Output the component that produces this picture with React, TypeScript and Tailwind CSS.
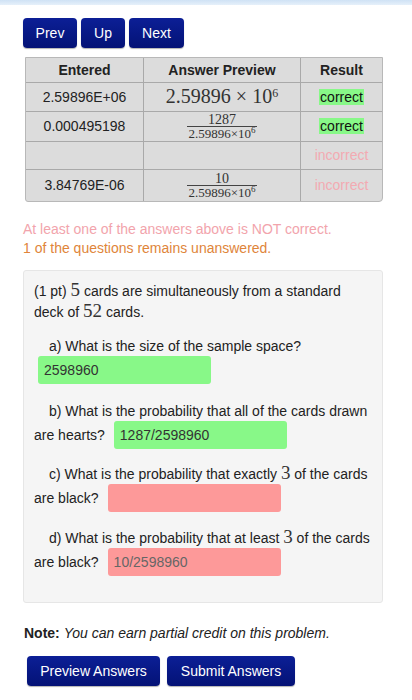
import React from 'react';

const navBtn =
  'h-[30px] rounded-[4px] bg-gradient-to-b from-[#0c1f96] to-[#041276] text-white text-[14px] flex items-center justify-center shadow-[0_1px_1px_rgba(0,0,0,0.3)]';

const serif = { fontFamily: '"Liberation Serif", "DejaVu Serif", serif' };

const Frac = ({ top }: { top: string }) => (
  <span className="inline-flex flex-col items-center leading-none align-middle" style={serif}>
    <span className="text-[14px] text-[#333] leading-[13px]">{top}</span>
    <span className="text-[13px] text-[#333] border-t border-[#444] leading-[14px] px-[1px]">
      2.59896×10<sup className="text-[9px] relative top-[-5px]">6</sup>
    </span>
  </span>
);

const M = ({ children }: { children: React.ReactNode }) => (
  <span className="text-[19px] text-[#333]" style={serif}>
    {children}
  </span>
);

const rows = [
  { entered: '2.59896E+06', preview: 'big', ok: true, h: 'h-[29px]' },
  { entered: '0.000495198', preview: '1287', ok: true, h: 'h-[30px]' },
  { entered: '', preview: '', ok: false, h: 'h-[28px]' },
  { entered: '3.84769E-06', preview: '10', ok: false, h: 'h-[31px]' },
];

export default function App() {
  return (
    <div className="w-[412px] min-h-[700px] bg-white text-[#222] text-[14px]" style={{ fontFamily: '"Liberation Sans", Arial, sans-serif' }}>
      <div className="h-[5px] bg-gradient-to-b from-[#cfe2f5] to-[#e6f0fa]" />
      <div className="pl-[23px] pr-[29px]">
        <div className="flex gap-[4px] mt-[13px]">
          <button className={`${navBtn} w-[54px]`}>Prev</button>
          <button className={`${navBtn} w-[44px]`}>Up</button>
          <button className={`${navBtn} w-[55px]`}>Next</button>
        </div>

        <table className="ml-[2px] mt-[9px] w-[358px] border-separate border-spacing-0 bg-[#dcdcdc] border border-[#b8b8b8] rounded-br-[4px] rounded-bl-[3px] overflow-hidden">
          <thead>
            <tr className="h-[25px]">
              <th className="w-[118px] p-0 font-bold text-[14px] border-r border-b border-[#a9a9a9]">Entered</th>
              <th className="w-[157px] p-0 font-bold text-[14px] border-r border-b border-[#a9a9a9]">Answer Preview</th>
              <th className="p-0 font-bold text-[14px] border-b border-[#a9a9a9]">Result</th>
            </tr>
          </thead>
          <tbody>
            {rows.map((r, i) => (
              <tr key={i} className={r.h}>
                <td className={`p-0 text-center border-r border-[#a9a9a9] ${i < 3 ? 'border-b' : ''}`}>{r.entered}</td>
                <td className={`p-0 text-center border-r border-[#a9a9a9] ${i < 3 ? 'border-b' : ''}`}>
                  {r.preview === 'big' && (
                    <span className="text-[20px] text-[#333] leading-none" style={serif}>
                      2.59896 × 10<sup className="text-[12px]">6</sup>
                    </span>
                  )}
                  {r.preview !== 'big' && r.preview !== '' && <Frac top={r.preview} />}
                </td>
                <td className={`p-0 text-center border-[#a9a9a9] ${i < 3 ? 'border-b' : ''}`}>
                  {r.ok ? (
                    <span className="bg-[#88f888] text-[#111] px-[1px]">correct</span>
                  ) : (
                    <span className="text-[#f3aab2]">incorrect</span>
                  )}
                </td>
              </tr>
            ))}
          </tbody>
        </table>

        <div className="mt-[18px] leading-[19px]">
          <div className="text-[#f2a4ac]">At least one of the answers above is NOT correct.</div>
          <div className="text-[#e0853a]">1 of the questions remains unanswered.</div>
        </div>

        <div className="mt-[12px] w-[360px] bg-[#f5f5f5] border border-[#e6e6e6] rounded-[3px] pl-[10px] pr-[8px] pt-[9px] pb-[26px] leading-[20px]">
          <p>
            (1 pt) <M>5</M> cards are simultaneously from a standard
            <br />
            deck of <M>52</M> cards.
          </p>
          <p className="mt-[14px] indent-[15px]">a) What is the size of the sample space?</p>
          <div className="ml-[4px] w-[173px] h-[28px] rounded-[3px] bg-[#88f888] flex items-center px-[6px] text-[#333]">2598960</div>

          <p className="mt-[17px] indent-[15px]">b) What is the probability that all of the cards drawn</p>
          <div className="flex items-center">
            <span>are hearts?</span>
            <div className="ml-[9px] w-[173px] h-[28px] rounded-[3px] bg-[#88f888] flex items-center px-[6px] text-[#333]">1287/2598960</div>
          </div>

          <p className="mt-[14px] indent-[15px]">
            c) What is the probability that exactly <M>3</M> of the cards
          </p>
          <div className="flex items-center">
            <span>are black?</span>
            <div className="ml-[9px] w-[173px] h-[28px] rounded-[3px] bg-[#fd9999] flex items-center px-[6px] text-[#555]"></div>
          </div>

          <p className="mt-[15px] indent-[15px]">
            d) What is the probability that at least <M>3</M> of the cards
          </p>
          <div className="flex items-center">
            <span>are black?</span>
            <div className="ml-[9px] w-[173px] h-[28px] rounded-[3px] bg-[#fd9999] flex items-center px-[6px] text-[#666]">10/2598960</div>
          </div>
        </div>

        <p className="mt-[20px] ml-[1px]">
          <b>Note:</b> <i>You can earn partial credit on this problem.</i>
        </p>

        <div className="flex gap-[7px] mt-[12px] ml-[4px]">
          <button className={`${navBtn} w-[133px]`}>Preview Answers</button>
          <button className={`${navBtn} w-[128px]`}>Submit Answers</button>
        </div>
      </div>
    </div>
  );
}
